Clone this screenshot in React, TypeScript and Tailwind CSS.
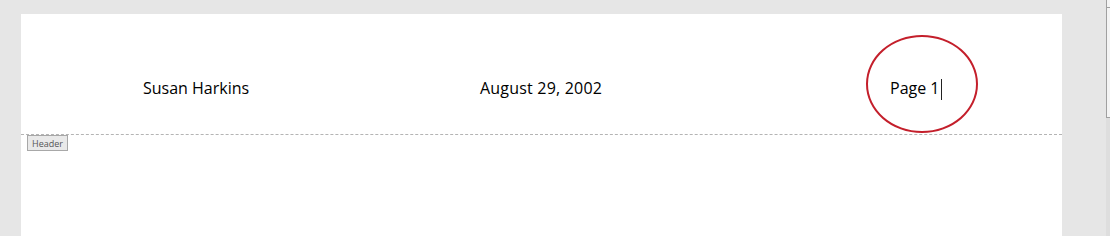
import React from 'react';

const font = { fontFamily: '"Open Sans", "Noto Sans", sans-serif' };

const App = () => {
  return (
    <div className="w-[1110px] h-[236px] bg-[#e6e6e6] flex overflow-hidden" style={font}>
      {/* page */}
      <div className="ml-[21px] mt-[14px] w-[1041px] h-[222px] bg-white flex flex-col">
        <div className="h-[121px] border-b border-dashed border-[#b4b4b4] flex items-end pb-[38px] pl-[122px] text-[16px] text-black leading-none">
          <div className="w-[337px]">Susan Harkins</div>
          <div className="w-[410px] tracking-[0.2px]">August 29, 2002</div>
          <div className="relative flex items-end">
            <span>Page 1</span>
            <span className="ml-[1px] mb-[-4px] w-px h-[21px] bg-[#222]" />
            <div className="absolute left-[-24px] top-[-44px] w-[112px] h-[98px] rounded-[50%] border-[2.5px] border-[#c41f2b]" />
          </div>
        </div>
        <div className="ml-[6px] mt-0 w-[41px] h-[16px] border border-[#a8a8a8] bg-[#e9e9e9] text-[9px] text-[#555] flex items-center justify-center leading-none">
          Header
        </div>
      </div>
      {/* right edge */}
      <div className="ml-[44px] w-[4px] flex flex-col">
        <div className="h-[118px] border-l border-b border-[#a0a0a0] bg-[#f4f4f4] flex flex-col">
          <div className="mt-[7px] h-px bg-[#a0a0a0]" />
        </div>
        <div className="flex-1 bg-[#dedede]" />
      </div>
    </div>
  );
};

export default App;
